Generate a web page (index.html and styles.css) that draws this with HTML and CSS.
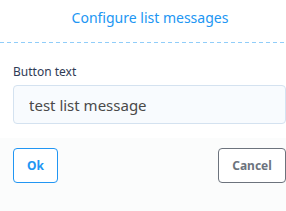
FILE: index.html
```html
<!DOCTYPE html>
<html lang="en">
<head>
    <meta charset="UTF-8">
    <title>Configure list messages</title>
    <link rel="stylesheet" href="styles.css">
</head>
<body>

<div class="modal">
    <div class="modal-header">
        <h2>Configure list messages</h2>
    </div>
    <div class="modal-body">
        <label class="field-label" for="buttonText">Button text</label>
        <input type="text" id="buttonText" class="field-input" value="test list message">
    </div>
    <div class="modal-footer">
        <button class="btn btn-ok">Ok</button>
        <button class="btn btn-cancel">Cancel</button>
    </div>
</div>

</body>
</html>
```

FILE: styles.css
```css
* {
    box-sizing: border-box;
    margin: 0;
    padding: 0;
}

body {
    font-family: 'Noto Sans', 'Open Sans', sans-serif;
    background: #fff;
    width: 286px;
    height: 211px;
    overflow: hidden;
}

.modal {
    display: flex;
    flex-direction: column;
    height: 211px;
}

/* dashed divider drawn as a gradient so dash length can be set */
.modal-header {
    height: 43px;
    padding-top: 9px;
    text-align: center;
    background: repeating-linear-gradient(90deg, #90cdf9 0 4px, transparent 4px 7px) bottom left / 100% 1px no-repeat;
}

.modal-header h2 {
    font-size: 14px;
    font-weight: normal;
    color: #2196f3;
    line-height: 18px;
    padding-left: 14px;
}

.modal-body {
    padding: 21px 0 14px 13px;
}

.field-label {
    display: block;
    font-size: 12px;
    line-height: 16px;
    color: #2f3b55;
    margin-bottom: 5px;
}

.field-input {
    width: 100%;
    height: 39px;
    padding: 0 15px;
    border: 1px solid #d4e2f0;
    border-radius: 4px;
    background: #f8fbfe;
    font-family: inherit;
    font-size: 15px;
    color: #4a4a4a;
    outline: none;
}

.modal-footer {
    flex: 1;
    display: flex;
    justify-content: space-between;
    align-items: flex-start;
    padding: 10px 0 0 13px;
    background: #fbfcfc;
}

.btn {
    height: 35px;
    border-radius: 4px;
    background: #fff;
    font-family: inherit;
    font-size: 12px;
    font-weight: bold;
    cursor: pointer;
}

.btn-ok {
    width: 45px;
    border: 1px solid #2196f3;
    color: #2196f3;
}

.btn-cancel {
    width: 68px;
    border: 1px solid #6c737d;
    color: #6c737d;
}
```
